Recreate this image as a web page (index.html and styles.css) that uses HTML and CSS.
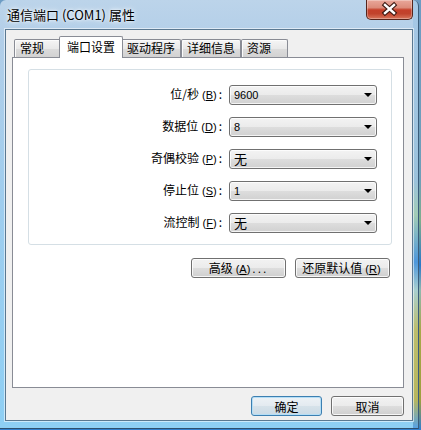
FILE: index.html
```html
<!DOCTYPE html>
<html>
<head>
  <title>通信端口 (COM1) 属性</title>
  <link rel="stylesheet" href="styles.css">
</head>
<body>
  <div class="window">
    <div class="titlebar">
      <span class="title">通信端口 (COM1) 属性</span>
      <span class="close">
        <svg width="45" height="19" viewBox="0 0 45 19">
          <path d="M18 5 L27 13 M27 5 L18 13" stroke="#3b1710" stroke-width="4.6" stroke-linecap="square" fill="none"/>
          <path d="M18 5 L27 13 M27 5 L18 13" stroke="#ffffff" stroke-width="2.4" stroke-linecap="square" fill="none"/>
        </svg>
      </span>
    </div>

    <div class="client">
      <div class="tabs">
        <span class="tab">常规</span>
        <span class="tab active">端口设置</span>
        <span class="tab">驱动程序</span>
        <span class="tab">详细信息</span>
        <span class="tab">资源</span>
      </div>

      <div class="panel">
        <div class="group">
          <label class="field-label">位/秒<span class="key">(<u>B</u>)</span>:</label>
          <div class="combo"><span class="value">9600</span><span class="arrow"></span></div>

          <label class="field-label">数据位<span class="key">(<u>D</u>)</span>:</label>
          <div class="combo"><span class="value">8</span><span class="arrow"></span></div>

          <label class="field-label">奇偶校验<span class="key">(<u>P</u>)</span>:</label>
          <div class="combo"><span class="value cjk">无</span><span class="arrow"></span></div>

          <label class="field-label">停止位<span class="key">(<u>S</u>)</span>:</label>
          <div class="combo"><span class="value">1</span><span class="arrow"></span></div>

          <label class="field-label">流控制<span class="key">(<u>F</u>)</span>:</label>
          <div class="combo"><span class="value cjk">无</span><span class="arrow"></span></div>
        </div>

        <div class="actions">
          <button class="btn wide">高级<span class="key">(<u>A</u>)</span><span class="dots">...</span></button>
          <button class="btn wide">还原默认值<span class="key">(<u>R</u>)</span></button>
        </div>
      </div>

      <div class="footer">
        <button class="btn default ok">确定</button>
        <button class="btn cancel">取消</button>
      </div>
    </div>
  </div>
</body>
</html>
```

FILE: styles.css
```css
body {
  margin: 0;
  width: 421px;
  height: 430px;
  overflow: hidden;
  font-family: "Noto Sans CJK SC", "Microsoft YaHei", sans-serif;
  font-size: 12px;
  color: #000;
  background: linear-gradient(to bottom, #6d9cc4 0, #6f9fb8 180px, #7fae8c 220px, #2a78c8 265px, #8fb8b0 290px, #a8a84a 330px, #9f9f3e 400px, #2f7ed0 430px);
}

/* window frame */
.window {
  width: 419px;
  height: 429px;
  box-sizing: border-box;
  border-right: 1px solid #3b5d7c;
  border-bottom: 1px solid #2f4f6d;
  border-radius: 6px 6px 0 0;
  background:
    linear-gradient(to bottom, #a6c8e6 0, #9bc2dc 180px, #a2ccb6 215px, #4d97dc 262px, #a8cfd0 290px, #bcbd6c 330px, #b6b65e 400px, #58a2e4 428px) right top / 5px 100% no-repeat,
    linear-gradient(to bottom, #bcd4ea 0, #b2cee8 40px, #9fcdee 200px, #8ecff4 100%);
}

.titlebar {
  height: 29px;
  display: flex;
  justify-content: space-between;
  align-items: flex-start;
  padding: 0 5px 0 7px;
}

.title {
  line-height: 29px;
  font-size: 13px;
  text-shadow: 0 0 6px #fff, 0 0 3px #fff;
}

.close {
  width: 47px;
  height: 20px;
  box-sizing: border-box;
  border: 1px solid #56241b;
  border-top: none;
  border-radius: 0 0 5px 5px;
  background: linear-gradient(to bottom, #e9a79a 0, #dc8b7a 40%, #c5402a 52%, #c1432c 72%, #d8765c 100%);
  box-shadow: inset 0 0 0 1px rgba(255, 255, 255, 0.3);
  display: flex;
  align-items: center;
  justify-content: center;
}

.close svg {
  display: block;
}

/* dialog body */
.client {
  width: 408px;
  height: 392px;
  margin-left: 5px;
  box-sizing: border-box;
  border: 1px solid #5a7891;
  background: #f0f0f0;
  padding: 6px 8px 0 6px;
  box-shadow: 0 0 0 1px rgba(255, 255, 255, 0.55);
}

.tabs {
  height: 21px;
  display: flex;
  align-items: flex-end;
  padding-left: 2px;
}

.tab {
  height: 18px;
  min-width: 47px;
  box-sizing: border-box;
  padding: 0 5px;
  border: 1px solid #898c95;
  border-bottom: none;
  border-radius: 2px 2px 0 0;
  background: linear-gradient(to bottom, #f5f5f5 0, #e9e9e9 50%, #dcdcdc 51%, #d2d2d2 100%);
  box-shadow: inset 1px 1px 0 #fbfbfb;
  line-height: 16px;
  white-space: nowrap;
}

.tab.active {
  height: 22px;
  margin: 0 -2px -1px;
  padding: 0 7px;
  background: #fff;
  box-shadow: none;
  line-height: 19px;
  z-index: 1;
}

.panel {
  height: 331px;
  box-sizing: border-box;
  background: #fff;
  border: 1px solid #898c95;
  padding: 11px 11px 0 15px;
}

.group {
  display: grid;
  grid-template-columns: 1fr 148px;
  column-gap: 7px;
  row-gap: 11px;
  align-items: center;
  padding: 14px 14px 11px;
  border: 1px solid #d5dfe5;
  border-radius: 3px;
}

.field-label {
  text-align: right;
  line-height: 20px;
  white-space: nowrap;
}

.key {
  font-family: "Liberation Sans", Arial, sans-serif;
  font-size: 11px;
  margin: 0 2px 0 3px;
}

.dots {
  font-family: "Liberation Sans", Arial, sans-serif;
  letter-spacing: 2px;
}

.combo {
  height: 20px;
  box-sizing: border-box;
  display: flex;
  align-items: center;
  padding: 0 4px 0 4px;
  border: 1px solid #707070;
  border-radius: 3px;
  background: linear-gradient(to bottom, #f3f3f3 0, #ebebeb 50%, #dddddd 51%, #d1d1d1 100%);
  box-shadow: inset 0 0 0 1px rgba(255, 255, 255, 0.75);
}

.value {
  font-family: "Liberation Sans", Arial, sans-serif;
  font-size: 11px;
}

.value.cjk {
  font-family: "Noto Sans CJK SC", sans-serif;
  font-size: 13px;
}

.arrow {
  margin-left: auto;
  width: 0;
  height: 0;
  border-left: 4px solid transparent;
  border-right: 4px solid transparent;
  border-top: 4px solid #000;
}

.actions {
  display: flex;
  justify-content: flex-end;
  gap: 9px;
  margin-top: 13px;
  padding-right: 2px;
}

.btn {
  height: 20px;
  box-sizing: border-box;
  padding: 0;
  font: inherit;
  color: #000;
  border: 1px solid #707070;
  border-radius: 3px;
  background: linear-gradient(to bottom, #f2f2f2 0, #ebebeb 50%, #dddddd 51%, #cfcfcf 100%);
  box-shadow: inset 0 0 0 1px rgba(255, 255, 255, 0.8);
  line-height: 17px;
}

.btn.wide {
  width: 95px;
}

.footer {
  display: flex;
  justify-content: flex-end;
  gap: 9px;
  margin-top: 8px;
}

.btn.ok {
  width: 71px;
}

.btn.cancel {
  width: 73px;
}

.btn.default {
  border-color: #3c7fb1;
  background: linear-gradient(to bottom, #edf2f6 0, #e3eaf0 50%, #d6e2ea 51%, #cbdae5 100%);
  box-shadow: inset 0 0 0 1px #b4def6;
}
```
